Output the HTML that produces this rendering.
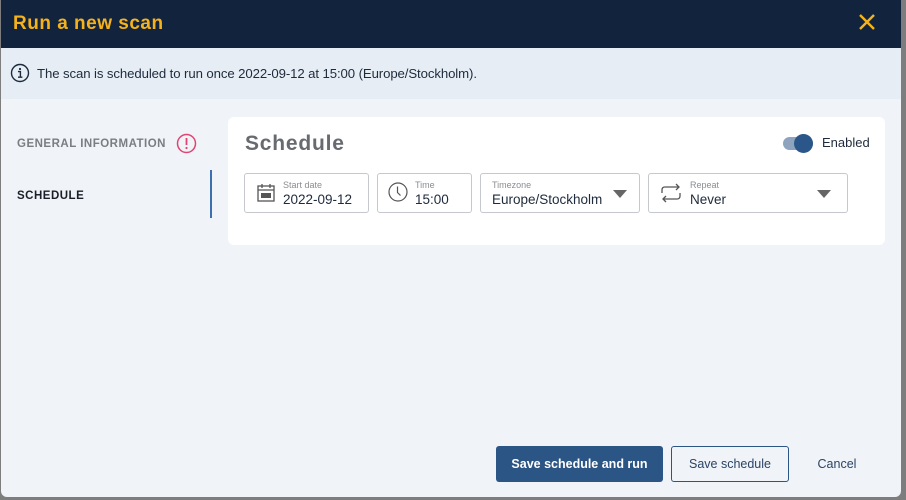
<!DOCTYPE html><html><head><style>
body{margin:0;width:906px;height:500px;background:#7d7d7d;font-family:"Liberation Sans",sans-serif;position:relative;overflow:hidden}
.dlg{position:absolute;left:1px;top:0;width:900px;height:497px;background:#f0f3f7;border-radius:0 0 6px 6px;overflow:hidden}
.hd{height:48px;background:#12233d;position:relative}
.hd h1{margin:0;position:absolute;left:12px;top:13px;font-size:19px;color:#f5b21b;font-weight:bold;letter-spacing:.5px}
.x{position:absolute;left:856px;top:12px}
.info{height:51px;background:#e6edf5;position:relative;font-size:13.2px;color:#1e2b3c}
.info span{position:absolute;left:36px;top:18px;letter-spacing:-.1px}
.info svg{position:absolute;left:9px;top:15px}
.nav{position:absolute;font-size:11.5px;font-weight:bold;letter-spacing:.5px}
.card{position:absolute;left:227px;top:117px;width:657px;height:128px;background:#fff;border-radius:6px}
.card h2{position:absolute;left:17px;top:15px;margin:0;font-size:21px;color:#676b70;letter-spacing:.8px}
.f{position:absolute;top:56px;height:40px;border:1px solid #c5c8cc;border-radius:3px;box-sizing:border-box}
.f .l{position:absolute;top:6px;font-size:9px;color:#8a8d91}
.f .v{position:absolute;top:18px;font-size:13.5px;color:#1e2b3c}
.tri{position:absolute;top:16px;width:0;height:0;border-left:7px solid transparent;border-right:7px solid transparent;border-top:8px solid #666}
.btn{position:absolute;top:446px;height:36px;box-sizing:border-box;border-radius:3px;font-size:12.5px;display:flex;align-items:center;justify-content:center}
</style></head><body>
<div class="dlg">
<div class="hd"><h1>Run a new scan</h1>
<svg class="x" width="20" height="20" viewBox="0 0 20 20"><path d="M3 3L17 17M17 3L3 17" stroke="#f5b21b" stroke-width="2.4"/></svg></div>
<div class="info"><svg width="20" height="20" viewBox="0 0 20 20"><circle cx="10" cy="10" r="8.5" fill="none" stroke="#1e2b3c" stroke-width="1.4"/><circle cx="10" cy="6" r="1.1" fill="#1e2b3c"/><path d="M8 8.6h2.4v5.4M8 14.2h4.4" stroke="#1e2b3c" stroke-width="1.4" fill="none"/></svg><span>The scan is scheduled to run once 2022-09-12 at 15:00 (Europe/Stockholm).</span></div>
<div class="nav" style="left:16px;top:138px;color:#7a7d82">GENERAL INFORMATION</div>
<svg style="position:absolute;left:175px;top:133px" width="21" height="21" viewBox="0 0 21 21"><circle cx="10.5" cy="10.5" r="9" fill="none" stroke="#e0456f" stroke-width="1.5"/><path d="M10.5 5v7" stroke="#e0456f" stroke-width="1.8"/><circle cx="10.5" cy="15" r="1.1" fill="#e0456f"/></svg>
<div class="nav" style="left:16px;top:190px;color:#1a1f2a">SCHEDULE</div>
<div style="position:absolute;left:209px;top:170px;width:2px;height:48px;background:#3a6fb0"></div>
<div class="card"><h2>Schedule</h2>
<div style="position:absolute;left:555px;top:20px;width:30px;height:13px;border-radius:7px;background:#8ea3bd"></div>
<div style="position:absolute;left:566px;top:17px;width:19px;height:19px;border-radius:50%;background:#2b5689"></div>
<div style="position:absolute;left:594px;top:18px;font-size:13px;color:#1e2b3c">Enabled</div>
<div class="f" style="left:16px;width:125px"><svg style="position:absolute;left:12px;top:9px" width="18" height="19" viewBox="0 0 18 19"><rect x="1" y="3" width="16" height="15" fill="none" stroke="#555" stroke-width="1.3"/><path d="M1 7h16M5 1v4M13 1v4" stroke="#555" stroke-width="1.3"/><rect x="4" y="10" width="10" height="5" fill="#555"/></svg><div class="l" style="left:38px">Start date</div><div class="v" style="left:38px">2022-09-12</div></div>
<div class="f" style="left:149px;width:95px"><svg style="position:absolute;left:10px;top:8px" width="20" height="20" viewBox="0 0 20 20"><circle cx="10" cy="10" r="9" fill="none" stroke="#555" stroke-width="1.2"/><path d="M9.5 4.5v6l3 3" stroke="#555" stroke-width="1.2" fill="none"/></svg><div class="l" style="left:37px">Time</div><div class="v" style="left:37px">15:00</div></div>
<div class="f" style="left:252px;width:160px"><div class="l" style="left:11px">Timezone</div><div class="v" style="left:11px">Europe/Stockholm</div><div class="tri" style="left:132px"></div></div>
<div class="f" style="left:420px;width:200px"><svg style="position:absolute;left:10px;top:8px" width="24" height="22" viewBox="0 0 24 22"><path d="M3 11V8c0-2 1-3 3-3h14M17 2l3 3-3 3M21 11v3c0 2-1 3-3 3H4M7 20l-3-3 3-3" fill="none" stroke="#555" stroke-width="1.3"/></svg><div class="l" style="left:41px">Repeat</div><div class="v" style="left:41px">Never</div><div class="tri" style="left:168px"></div></div>
</div>
<div class="btn" style="left:495px;width:167px;background:#2b5585;color:#fff;font-weight:bold">Save schedule and run</div>
<div class="btn" style="left:670px;width:118px;border:1px solid #2b5585;color:#2b4466">Save schedule</div>
<div class="btn" style="left:796px;width:80px;color:#2b4466">Cancel</div>
</div>
</body></html>
